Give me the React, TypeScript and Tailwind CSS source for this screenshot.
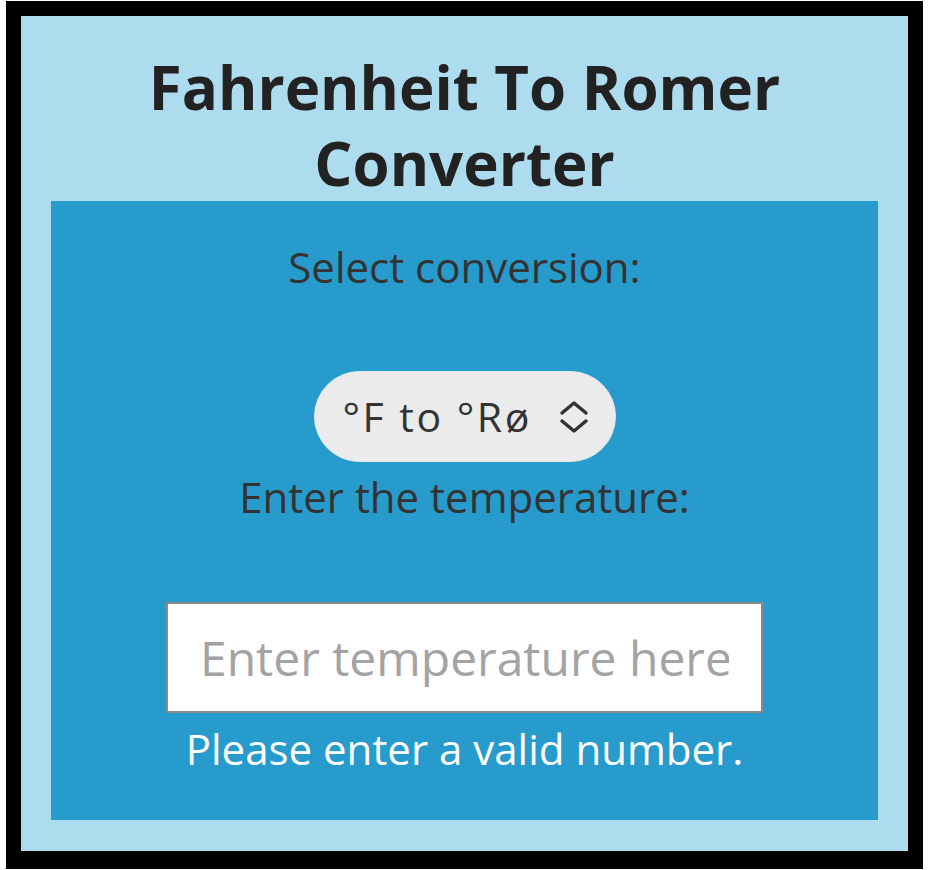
const font = { fontFamily: '"Open Sans", "Noto Sans", sans-serif' };

const UpDownIcon = () => (
  <svg width="30" height="34" viewBox="0 0 30 34" fill="none" stroke="#333" strokeWidth="3.5" strokeLinecap="round" strokeLinejoin="round">
    <path d="M3 13 L15 3 L27 13" />
    <path d="M3 21 L15 31 L27 21" />
  </svg>
);

export default function App() {
  return (
    <div className="px-[6px] pt-[1px]" style={font}>
      <div className="border-[15px] border-b-[18px] border-black bg-[#aedcef] px-[30px] pt-[33px] pb-[31px]">
        <h1 className="text-center text-[60px] leading-[76px] font-bold text-[#222]">
          Fahrenheit To Romer Converter
        </h1>
        <div className="bg-[#269bcc] pt-[39px] pb-[44px] flex flex-col items-center">
          <label className="text-[42px] leading-[54px] text-[#333]">Select conversion:</label>
          <div className="mt-[77px] flex h-[91px] w-[302px] items-center justify-between rounded-full border border-[#dfe9ee] bg-[#ebebeb] pl-[28px] pr-[26px]">
            <span className="text-[41px] tracking-[2.5px] text-[#333]">°F to °Rø</span>
            <UpDownIcon />
          </div>
          <label className="mt-[8px] text-[42px] leading-[54px] text-[#333]">Enter the temperature:</label>
          <input
            type="text"
            placeholder="Enter temperature here"
            className="mt-[78px] h-[111px] w-[597px] border-2 border-[#8a8a8a] bg-white px-[32px] text-[48px] text-[#333] placeholder:text-[#a3a3a3] outline-none"
            style={font}
          />
          <p className="mt-[9px] text-[42px] leading-[54px] text-white">Please enter a valid number.</p>
        </div>
      </div>
    </div>
  );
}
